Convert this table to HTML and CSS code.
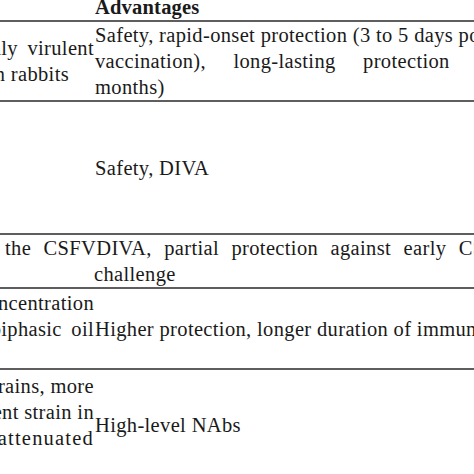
FILE: index.html
```html
<!DOCTYPE html>
<html>
<head>
<meta charset="utf-8">
<link rel="stylesheet" href="styles.css">
</head>
<body>
<div class="frame">
<table class="tbl">
  <colgroup><col class="c1"><col class="c2"></colgroup>
  <thead>
    <tr class="head"><th></th><th class="adv">Advantages</th></tr>
  </thead>
  <tbody>
    <tr class="r1">
      <td class="left"><div class="ln"><span class="wide">highly virulent</span></div><div class="ln last"><span>strain in rabbits</span></div></td>
      <td class="right"><div>Safety, rapid-onset protection (3 to 5 days post-</div><div class="gap">vaccination), long-lasting protection (several</div><div>months)</div></td>
    </tr>
    <tr class="r2">
      <td class="left"></td>
      <td class="right"><div>Safety, DIVA</div></td>
    </tr>
    <tr class="r3">
      <td class="span" colspan="2"><div class="j1">the CSFVDIVA, partial protection against early CSFV</div><div class="j2">challenge</div></td>
    </tr>
    <tr class="r4">
      <td class="left"><div class="ln"><span>antigen concentration</span></div><div class="ln"><span class="wide">and biphasic oil</span></div><div class="ln"></div></td>
      <td class="right"><div>Higher protection, longer duration of immunity</div></td>
    </tr>
    <tr class="r5">
      <td class="left"><div class="ln"><span>other strains, more</span></div><div class="ln"><span>the virulent strain in</span></div><div class="ln"><span class="tight">or attenuated</span></div><div class="ln"></div></td>
      <td class="right"><div>High-level NAbs</div></td>
    </tr>
  </tbody>
</table>
</div>
</body>
</html>
```

FILE: styles.css
```css
html, body {
  margin: 0;
  padding: 0;
  background: #ffffff;
  overflow: hidden;
}

.frame {
  width: 474px;
  height: 474px;
  overflow: hidden;
}

.tbl {
  margin-top: -6px;
  border-collapse: collapse;
  table-layout: fixed;
  width: 474px;
  font-family: "Liberation Serif", "Times New Roman", serif;
  font-size: 20.5px;
  letter-spacing: 0.35px;
  line-height: 26px;
  color: #1a1a1a;
}

.c1 { width: 94px; }
.c2 { width: 380px; }

th, td {
  padding: 0;
  vertical-align: middle;
  white-space: nowrap;
  overflow: visible;
}

.adv {
  text-align: left;
  font-weight: bold;
  letter-spacing: 0.2px;
  padding-left: 1px;
  height: 26px;
}

tbody tr {
  border-top: 2px solid #5e5e5e;
}

.r1 td { height: 77px; }
.r2 td { height: 131px; }
.r3 td { height: 52px; }
.r4 td { height: 79px; }
.r5 td { height: 110px; }

.left .ln {
  display: flex;
  justify-content: flex-end;
  height: 26px;
}

.left .ln.last { padding-right: 25px; }

.wide { word-spacing: 4px; }

.tight { letter-spacing: 1.2px; word-spacing: 6px; }

.right { padding-left: 1px; }

.gap { word-spacing: 22px; }

.j1 {
  padding-left: 5px;
  word-spacing: 7px;
}

.j2 { padding-left: 94px; }
```
